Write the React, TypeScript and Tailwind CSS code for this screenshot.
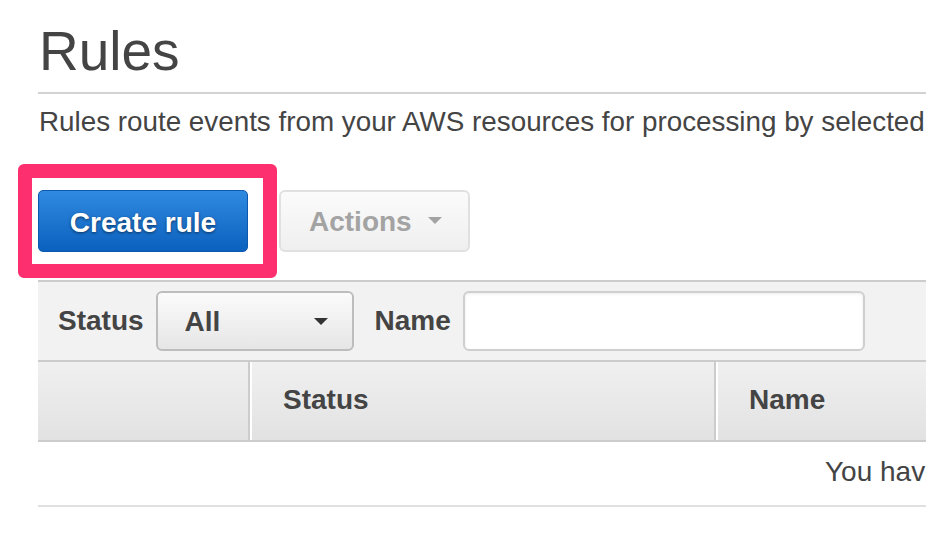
export default function App() {
  return (
    <div className="relative h-[542px] w-[926px] overflow-hidden bg-white font-['Liberation_Sans',Arial,sans-serif] text-[#444]">
      <div className="w-[1100px] pl-[38px]">
        <h1 className="pl-px pt-[23px] text-[55px] leading-[56px]">Rules</h1>
        <div className="mt-[13px] h-[2px] bg-[#d2d2d2]" />
        <p className="mt-[14px] whitespace-nowrap pl-px text-[27.8px] leading-[27px]">
          Rules route events from your AWS resources for processing by selected targets.
        </p>

        <div className="mt-[55px] flex gap-[31px]">
          <button className="h-[62px] w-[210px] rounded-[5px] border border-[#0d58ad] bg-gradient-to-b from-[#2f8ae0] to-[#0a61be] pt-[3px] text-[28px] font-bold text-white [text-shadow:0_1px_3px_rgba(0,0,0,0.55)]">
            Create rule
          </button>
          <button className="flex h-[62px] w-[191px] items-center rounded-[6px] border-2 border-[#e0e0e0] bg-gradient-to-b from-[#fbfbfb] to-[#efefef] pl-[28px] pt-[2px] text-[28px] font-bold text-[#a3a3a3]">
            Actions
            <span className="mb-[4px] ml-[16px] h-0 w-0 border-x-[7px] border-t-[7px] border-x-transparent border-t-[#a3a3a3]" />
          </button>
        </div>

        <div className="mt-[28px] flex h-[82px] items-center border-y-2 border-[#cccccc] bg-[#f2f2f2] pl-[20px] text-[28px] font-bold">
          <span>Status</span>
          <div className="ml-[12px] flex h-[60px] w-[198px] items-center justify-between rounded-[6px] border-2 border-[#bdbdbd] bg-gradient-to-b from-[#fbfbfb] to-[#e6e6e6] pl-[27px] pr-[24px]">
            <span className="pt-[2px]">All</span>
            <span className="h-0 w-0 border-x-[7px] border-t-[7px] border-x-transparent border-t-[#333]" />
          </div>
          <span className="ml-[21px]">Name</span>
          <div className="ml-[12px] h-[60px] w-[402px] rounded-[6px] border-2 border-[#cfcfcf] bg-white shadow-[inset_0_1px_3px_rgba(0,0,0,0.08)]" />
        </div>

        <div className="flex h-[80px] border-b-2 border-[#cccccc] bg-gradient-to-b from-[#f0f0f0] to-[#e2e2e2] text-[28px] font-bold">
          <div className="w-[210px]" />
          <div className="flex w-[466px] items-center border-l-2 border-[#cccccc] pl-[33px] shadow-[inset_2px_0_0_#ffffff]">
            <span className="pb-[3px]">Status</span>
          </div>
          <div className="flex flex-1 items-center border-l-2 border-[#cccccc] pl-[33px] shadow-[inset_2px_0_0_#ffffff]">
            <span className="pb-[3px]">Name</span>
          </div>
        </div>

        <div className="flex h-[65px] items-center whitespace-nowrap border-b-2 border-[#e0e0e0] pb-[4px] pl-[787px] text-[28px]">
          You have no rules
        </div>
      </div>

      <div className="pointer-events-none absolute left-[18px] top-[164px] h-[114px] w-[259px] rounded-[6px] border-[14px] border-[#fd2f6f]" />
    </div>
  );
}
